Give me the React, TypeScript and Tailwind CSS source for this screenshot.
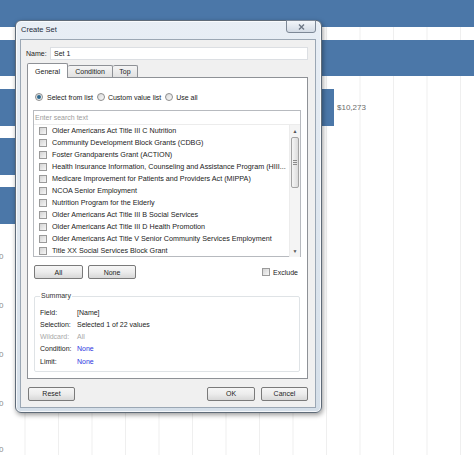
import React from "react";

const ITEMS = [
  "Older Americans Act Title III C Nutrition",
  "Community Development Block Grants (CDBG)",
  "Foster Grandparents Grant (ACTION)",
  "Health Insurance Information, Counseling and Assistance Program (HIII...",
  "Medicare Improvement for Patients and Providers Act (MIPPA)",
  "NCOA Senior Employment",
  "Nutrition Program for the Elderly",
  "Older Americans Act Title III B Social Services",
  "Older Americans Act Title III D Health Promotion",
  "Older Americans Act Title V Senior Community Services Employment",
  "Title XX Social Services Block Grant",
];

const SUMMARY = [
  { label: "Field:", value: "[Name]", tone: "text-[#222]", labelTone: "text-[#222]" },
  { label: "Selection:", value: "Selected 1 of 22 values", tone: "text-[#222]", labelTone: "text-[#222]" },
  { label: "Wildcard:", value: "All", tone: "text-[#a8a8a8]", labelTone: "text-[#a8a8a8]" },
  { label: "Condition:", value: "None", tone: "text-[#2b35e0]", labelTone: "text-[#222]" },
  { label: "Limit:", value: "None", tone: "text-[#2b35e0]", labelTone: "text-[#222]" },
];

const BAR = "#4b77a8";

function Chart() {
  const grid = Array.from({ length: 14 }, (_, i) => 25 + i * 33.5);
  const bars = [
    { y: 0, h: 27, w: 474 },
    { y: 40, h: 36, w: 474 },
    { y: 89, h: 37, w: 334 },
    { y: 138, h: 37, w: 200 },
    { y: 187, h: 37, w: 200 },
  ];
  const ticks = [256, 305, 354, 403, 449];
  return (
    <svg width={474} height={455} className="block">
      <rect width={474} height={455} fill="#ffffff" />
      {grid.map((x) => (
        <line key={x} x1={x} x2={x} y1={0} y2={455} stroke="#efefef" />
      ))}
      {bars.map((b) => (
        <rect key={b.y} x={0} y={b.y} width={b.w} height={b.h} fill={BAR} />
      ))}
      <text x={337} y={110} fontSize={8} fill="#6b6b6b" fontFamily="Liberation Sans, sans-serif">
        $10,273
      </text>
      {ticks.map((y) => (
        <text key={y} x={-1} y={y + 3} fontSize={8} fill="#8a8a8a" fontFamily="Liberation Sans, sans-serif">
          0
        </text>
      ))}
    </svg>
  );
}

function Check() {
  return (
    <span className="block h-[8px] w-[8px] shrink-0 border border-[#9a9a9a] bg-gradient-to-br from-[#d4d4d4] to-[#f7f7f7]" />
  );
}

function Radio({ on }: { on?: boolean }) {
  return (
    <span className="flex h-[8px] w-[8px] shrink-0 items-center justify-center rounded-full border border-[#8e8e8e] bg-gradient-to-br from-[#d8d8d8] to-[#fafafa]">
      {on && <span className="block h-[4px] w-[4px] rounded-full bg-[#2f6a8f]" />}
    </span>
  );
}

function Button({ label, className }: { label: string; className: string }) {
  return (
    <div
      className={`flex h-[14px] items-center justify-center rounded-[2px] border border-[#7a7a7a] bg-gradient-to-b from-[#f6f6f6] via-[#ececec] to-[#d8d8d8] text-[#1e1e1e] ${className}`}
    >
      {label}
    </div>
  );
}

function Scrollbar() {
  return (
    <div className="flex w-[11px] flex-col border-l border-[#ececec] bg-[#f4f4f4]">
      <div className="flex h-[12px] items-center justify-center text-[5px] text-[#555]">▲</div>
      <div className="mx-[1px] flex h-[51px] flex-col items-center justify-center gap-[1px] rounded-[2px] border border-[#a3a3a3] bg-gradient-to-r from-[#f6f6f6] to-[#dcdcdc]">
        <span className="block h-px w-[4px] bg-[#8c8c8c]" />
        <span className="block h-px w-[4px] bg-[#8c8c8c]" />
        <span className="block h-px w-[4px] bg-[#8c8c8c]" />
      </div>
      <div className="flex-1" />
      <div className="flex h-[12px] items-center justify-center text-[5px] text-[#555]">▼</div>
    </div>
  );
}

function Dialog() {
  return (
    <div className="absolute left-[15px] top-[20px] flex h-[393px] w-[307px] flex-col rounded-[6px] border border-[#5f6b78] bg-gradient-to-b from-[#e8eef5] to-[#d5dfe9] pb-[4px] pl-[4px] pr-[5px] shadow-[inset_0_0_0_1px_rgba(255,255,255,0.75),1px_2px_5px_rgba(0,0,0,0.4)]">
      <div className="flex h-[18px] shrink-0 justify-between">
        <span className="self-center pl-[1px] text-[7.5px] text-[#1f2c3b]">Create Set</span>
        <div className="-mt-px flex h-[13px] w-[30px] items-center justify-center rounded-b-[3px] border border-[#7d8896] bg-gradient-to-b from-[#f3f6fa] to-[#d3dbe5]">
          <svg width="7" height="6" viewBox="0 0 7 6">
            <path d="M1 0.5 L6 5.5 M6 0.5 L1 5.5" stroke="#6d7785" strokeWidth="1.4" />
          </svg>
        </div>
      </div>
      <div className="flex flex-1 flex-col border border-[#9ba7b4] bg-[#f0f0f0] pb-[7px] pl-[6px] pr-[7px] pt-[7px]">
        <div className="flex h-[13px] items-center">
          <span className="-ml-[1px] w-[24px]">Name:</span>
          <div className="flex h-[13px] flex-1 items-center border border-[#dcdfe3] bg-white pl-[3px]">Set 1</div>
        </div>

        <div className="mt-[3px] flex h-[14px] items-end">
          <div className="relative z-10 -mb-px flex h-[15px] w-[41px] items-center justify-center rounded-t-[2px] border border-b-0 border-[#8e9196] bg-white">
            General
          </div>
          <div className="flex h-[12px] w-[45px] items-center justify-center rounded-t-[2px] border border-b-0 border-l-0 border-[#8e9196] bg-gradient-to-b from-[#f5f5f5] to-[#e1e1e1]">
            Condition
          </div>
          <div className="flex h-[12px] w-[25px] items-center justify-center rounded-t-[2px] border border-b-0 border-l-0 border-[#8e9196] bg-gradient-to-b from-[#f5f5f5] to-[#e1e1e1]">
            Top
          </div>
        </div>

        <div className="flex h-[302px] flex-col border border-[#8e9196] bg-white pb-[6px] pt-[14px]">
          <div className="flex h-[10px] items-center pl-[7px]">
            <Radio on />
            <span className="ml-[4px]">Select from list</span>
            <span className="ml-[4px]"><Radio /></span>
            <span className="ml-[3px]">Custom value list</span>
            <span className="ml-[4px]"><Radio /></span>
            <span className="ml-[3px]">Use all</span>
          </div>

          <div className="ml-[5px] mr-[6px] mt-[8px] flex h-[147px] flex-col border border-[#b7babf]">
            <div className="flex h-[14px] shrink-0 items-center border-b border-[#ececec] pl-[1px] text-[#9c9c9c]">
              Enter search text
            </div>
            <div className="flex flex-1">
              <div className="flex flex-1 flex-col overflow-hidden">
                {ITEMS.map((it) => (
                  <div key={it} className="flex h-[12px] shrink-0 items-center pl-[5px]">
                    <Check />
                    <span className="ml-[5px] whitespace-nowrap text-[7.2px]">{it}</span>
                  </div>
                ))}
              </div>
              <Scrollbar />
            </div>
          </div>

          <div className="mt-[8px] flex h-[14px] items-center pl-[6px] pr-[9px]">
            <Button label="All" className="w-[49px]" />
            <Button label="None" className="ml-[5px] w-[48px]" />
            <div className="flex-1" />
            <Check />
            <span className="ml-[3px]">Exclude</span>
          </div>

          <fieldset className="ml-[6px] mr-[7px] mt-[13px] flex h-[80px] flex-col rounded-[2px] border border-[#dfe3e6] px-[5px] pb-[4px]">
            <legend className="px-[1px] leading-[8px] text-[#333]">Summary</legend>
            <div className="mt-[6px] flex flex-col">
              {SUMMARY.map((r) => (
                <div key={r.label} className="flex h-[12.25px] items-center">
                  <span className={`w-[37px] ${r.labelTone}`}>{r.label}</span>
                  <span className={r.tone}>{r.value}</span>
                </div>
              ))}
            </div>
          </fieldset>
        </div>

        <div className="mt-[8px] flex h-[13px] items-center pl-[1px]">
          <Button label="Reset" className="h-[13px] w-[47px]" />
          <div className="flex-1" />
          <Button label="OK" className="h-[13px] w-[48px]" />
          <Button label="Cancel" className="ml-[6px] h-[13px] w-[47px]" />
        </div>
      </div>
    </div>
  );
}

export default function App() {
  return (
    <div className="relative h-[455px] w-[474px] overflow-hidden bg-white font-['Liberation_Sans',Arial,sans-serif] text-[7px] leading-none text-[#222]">
      <Chart />
      <Dialog />
    </div>
  );
}
